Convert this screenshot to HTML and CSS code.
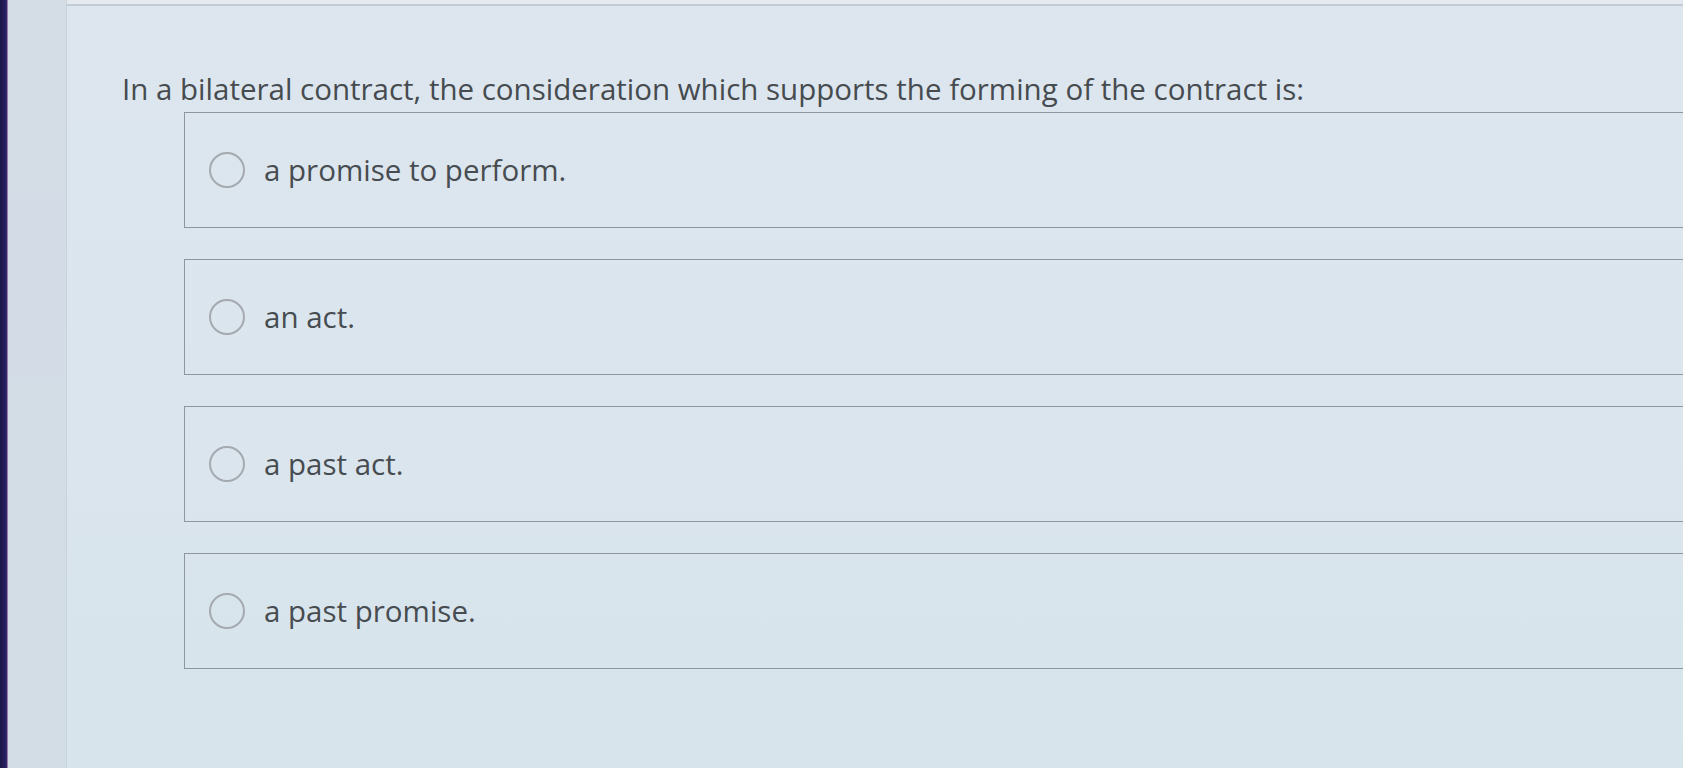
FILE: index.html
```html
<!DOCTYPE html>
<html lang="en">
<head>
<meta charset="utf-8">
<title>Question</title>
<link rel="stylesheet" href="styles.css">
</head>
<body>
<div class="screen">
  <div class="bezel"></div>
  <aside class="sidebar"></aside>
  <main class="panel">
    <div class="topband"></div>
    <section class="content">
      <p class="question">In a bilateral contract, the consideration which supports the forming of the contract is:</p>
      <div class="options">
        <label class="option"><span class="radio"></span><span class="text">a promise to perform.</span></label>
        <label class="option"><span class="radio"></span><span class="text">an act.</span></label>
        <label class="option"><span class="radio"></span><span class="text">a past act.</span></label>
        <label class="option"><span class="radio"></span><span class="text">a past promise.</span></label>
      </div>
    </section>
  </main>
</div>
</body>
</html>
```

FILE: styles.css
```css
html, body {
  margin: 0;
  padding: 0;
  height: 100%;
  overflow: hidden;
}
body {
  font-family: "Open Sans", "Noto Sans", sans-serif;
  background: #dae5ed;
}
.screen {
  display: flex;
  height: 768px;
  width: 1683px;
}
.bezel {
  width: 8px;
  flex: none;
  background: linear-gradient(to right, #1c1648 0, #2b2266 80%, #c7a7c8 100%);
}
.sidebar {
  width: 58px;
  flex: none;
  background: linear-gradient(to bottom, #d4dce6, #d2dde6);
  border-right: 1px solid #c9d3dc;
}
.panel {
  flex: 1;
  display: flex;
  flex-direction: column;
  background: linear-gradient(to bottom, #dde6ee 0, #dae5ed 60%, #d7e4ec 100%);
  min-width: 0;
}
.topband {
  height: 4px;
  flex: none;
  background: #e4eaf0;
  border-bottom: 2px solid #c3ccd5;
}
.content {
  padding: 65px 0 0 55px;
}
.question {
  margin: 0 0 5px;
  font-size: 29.5px;
  line-height: 36px;
  color: #464b50;
  white-space: nowrap;
}
.options {
  display: flex;
  flex-direction: column;
  gap: 31px;
  margin-left: 62px;
}
.option {
  display: flex;
  align-items: center;
  gap: 19px;
  height: 116px;
  box-sizing: border-box;
  border: 1.5px solid #8e979e;
  border-right: none;
  padding-left: 24px;
}
.radio {
  width: 36px;
  height: 36px;
  box-sizing: border-box;
  border: 2px solid #a4aaaf;
  border-radius: 50%;
  flex: none;
}
.text {
  font-size: 29.5px;
  color: #474c51;
  line-height: 36px;
}
```
